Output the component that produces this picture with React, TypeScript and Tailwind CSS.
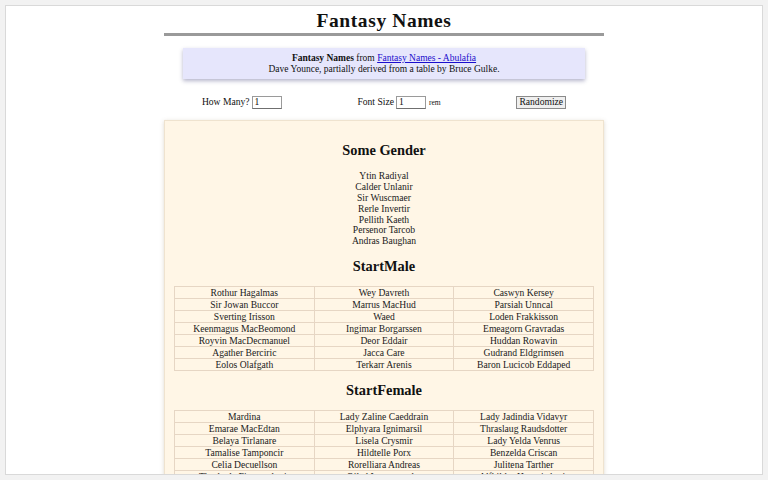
import React from "react";

const someGender = [
  "Ytin Radiyal",
  "Calder Unlanir",
  "Sir Wuscmaer",
  "Rerle Invertir",
  "Pellith Kaeth",
  "Persenor Tarcob",
  "Andras Baughan",
];

const startMale = [
  ["Rothur Hagalmas", "Wey Davreth", "Caswyn Kersey"],
  ["Sir Jowan Buccor", "Marrus MacHud", "Parsiah Unncal"],
  ["Sverting Irisson", "Waed", "Loden Frakkisson"],
  ["Keenmagus MacBeomond", "Ingimar Borgarssen", "Emeagorn Gravradas"],
  ["Royvin MacDecmanuel", "Deor Eddair", "Huddan Rowavin"],
  ["Agather Berciric", "Jacca Care", "Gudrand Eldgrimsen"],
  ["Eolos Olafgath", "Terkarr Arenis", "Baron Lucicob Eddaped"],
];

const startFemale = [
  ["Mardina", "Lady Zaline Caeddrain", "Lady Jadindia Vidavyr"],
  ["Emarae MacEdtan", "Elphyara Ignimarsil", "Thraslaug Raudsdotter"],
  ["Belaya Tirlanare", "Lisela Crysmir", "Lady Yelda Venrus"],
  ["Tamalise Tamponcir", "Hildtelle Porx", "Benzelda Criscan"],
  ["Celia Decuellson", "Rorelliara Andreas", "Julitena Tarther"],
  ["Thorkatla Fiorunndottir", "Oiled Lormerundar", "Alfhildur Hrapnisdottir"],
  ["Lady Mirabel Orr", "Gwenna Tolvane", "Sigrunn Eldadottir"],
];

function NameTable({ rows }: { rows: string[][] }) {
  return (
    <table className="w-full border-collapse text-[9.6px] leading-[11px]">
      <tbody>
        {rows.map((row, i) => (
          <tr key={i}>
            {row.map((name, j) => (
              <td
                key={j}
                className="w-1/3 border border-[#e6d6c4] p-0 text-center text-[#1a1a1a]"
              >
                {name}
              </td>
            ))}
          </tr>
        ))}
      </tbody>
    </table>
  );
}

export default function App() {
  return (
    <div
      className="h-[480px] w-[768px] overflow-hidden bg-[#f2f2f2] p-[5px]"
      style={{ fontFamily: '"Liberation Serif", "Times New Roman", serif' }}
    >
      <div className="h-[470px] overflow-hidden border border-[#d9d9d9] bg-white">
        <div className="mx-auto w-[440px] pt-[3px]">
          <h1 className="text-center text-[19.5px] font-bold leading-[23px] tracking-[0.6px] text-[#111]">
            Fantasy Names
          </h1>
          <div className="mt-[1px] h-[3px] bg-[#9a9a9a]" />

          <div className="mx-[19px] mt-[12px] bg-[#e6e6fc] pb-[4px] pt-[5px] text-center text-[9.5px] leading-[11px] text-[#111] shadow-[0_2px_4px_rgba(90,90,140,0.45)]">
            <div>
              <b>Fantasy Names</b> from{" "}
              <a href="#" className="text-[#1a0dcc] underline">
                Fantasy Names - Abulafia
              </a>
            </div>
            <div>Dave Younce, partially derived from a table by Bruce Gulke.</div>
          </div>

          <div className="mt-[16px] flex items-center justify-around text-[9.6px] text-[#111]">
            <label className="flex items-center gap-[2px]">
              <span>How Many?</span>
              <span className="flex h-[13px] w-[30px] items-center border border-[#9a9a9a] border-b-[#6f6f6f] bg-white pl-[2px] leading-none">
                1
              </span>
            </label>
            <label className="flex items-center gap-[2px]">
              <span>Font Size</span>
              <span className="flex h-[13px] w-[30px] items-center border border-[#9a9a9a] border-b-[#6f6f6f] bg-white pl-[2px] leading-none">
                1
              </span>
              <span className="ml-[1px] text-[7.5px]">rem</span>
            </label>
            <button className="h-[13px] border border-[#8a8a8a] bg-[#efefef] px-[2px] leading-none">
              Randomize
            </button>
          </div>

          <div className="mt-[11px] border border-[#efe3cf] bg-[#fff6e6] px-[9px] pb-[20px] pt-[21px] shadow-[0_1px_4px_rgba(120,100,60,0.25)]">
            <h2 className="text-center text-[14.4px] font-bold leading-[17px] text-[#111]">
              Some Gender
            </h2>
            <div className="mt-[12px] text-center text-[9.6px] leading-[10.8px] text-[#1a1a1a]">
              {someGender.map((n) => (
                <div key={n}>{n}</div>
              ))}
            </div>

            <h2 className="mt-[11px] text-center text-[14.4px] font-bold leading-[17px] text-[#111]">
              StartMale
            </h2>
            <div className="mt-[11px]">
              <NameTable rows={startMale} />
            </div>

            <h2 className="mt-[11px] text-center text-[14.4px] font-bold leading-[17px] text-[#111]">
              StartFemale
            </h2>
            <div className="mt-[11px]">
              <NameTable rows={startFemale} />
            </div>
          </div>
        </div>
      </div>
    </div>
  );
}
